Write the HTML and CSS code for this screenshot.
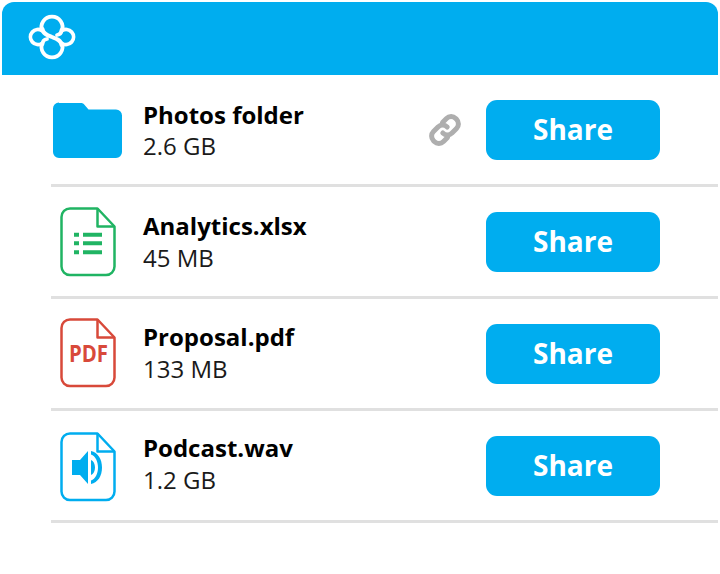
FILE: index.html
```html
<!DOCTYPE html>
<html lang="en">
<head>
  <meta charset="UTF-8">
  <title>Shared files</title>
  <link rel="stylesheet" href="styles.css">
</head>
<body>
  <header class="top-bar">
    <svg class="logo" width="48" height="46" viewBox="0 0 48 46">
      <g fill="none" stroke="#fff" stroke-linecap="round">
        <path stroke-width="3.800" d="M14.200 16.800A10.500 10.500 0 1 1 33.800 16.800A7.500 7.500 0 1 1 33.800 29.200A10.500 10.500 0 1 1 14.200 29.200A7.500 7.500 0 1 1 14.200 16.800z"/>
        <path stroke-width="4" d="M14.500 15C15 20 20 21.500 24 23S33 26 33.500 31"/>
        <path stroke-width="3.800" d="M33.500 16C33.500 18.500 32 20.500 29 21M14.500 30C14.500 27.500 16 25.500 19 25"/>
      </g>
    </svg>
  </header>

  <ul class="file-list">
    <li class="file-row">
      <div class="file-icon">
        <svg width="70" height="56" viewBox="0 0 70 56">
          <path fill="#00adef" d="M6 1h22c1.500 0 2.300.5 3.200 1.500l4.300 5h27.500a6 6 0 0 1 6 6v36.500a6 6 0 0 1-6 6h-57a6 6 0 0 1-6-6v-43.500a6 6 0 0 1 6-6z"/>
        </svg>
      </div>
      <div class="file-info">
        <div class="file-name">Photos folder</div>
        <div class="file-size">2.6 GB</div>
      </div>
      <svg class="link-icon" width="34" height="34" viewBox="0 0 34 34">
        <g fill="none" stroke="#aeaeae" stroke-width="5" stroke-linecap="round">
          <path d="M14.500 9.500l4-4a6.500 6.500 0 0 1 9.200 0l.8.8a6.500 6.500 0 0 1 0 9.200l-4.500 4.500a6.500 6.500 0 0 1-9.200 0"/>
          <path d="M19.500 24.500l-4 4a6.500 6.500 0 0 1-9.200 0l-.8-.8a6.500 6.500 0 0 1 0-9.200l4.500-4.500a6.500 6.500 0 0 1 9.200 0"/>
        </g>
      </svg>
      <button class="share-button">Share</button>
    </li>
    <li class="file-row">
      <div class="file-icon">
        <svg class="doc" width="56" height="70" viewBox="0 0 56 70" stroke="#20b463">
          <path class="doc-line" d="M10 1.500h27.500l17 18v40a8.500 8.500 0 0 1-8.500 8.500h-36a8.500 8.500 0 0 1-8.500-8.500v-49.500a8.500 8.500 0 0 1 8.500-8.500z"/>
          <path class="doc-line" d="M37.500 1.500v18h17"/>
          <path class="list-mark" d="M14 27.700h5M23 27.700h19M14 36.300h5M23 36.300h19M14 45.200h5M23 45.200h19"/>
        </svg>
      </div>
      <div class="file-info">
        <div class="file-name">Analytics.xlsx</div>
        <div class="file-size">45 MB</div>
      </div>
      <button class="share-button">Share</button>
    </li>
    <li class="file-row">
      <div class="file-icon">
        <svg class="doc" width="56" height="70" viewBox="0 0 56 70" stroke="#d8493a">
          <path class="doc-line" d="M10 1.500h27.500l17 18v40a8.500 8.500 0 0 1-8.500 8.500h-36a8.500 8.500 0 0 1-8.500-8.500v-49.500a8.500 8.500 0 0 1 8.500-8.500z"/>
          <path class="doc-line" d="M37.500 1.500v18h17"/>
          <text class="pdf-mark" x="9" y="44" textLength="39" lengthAdjust="spacingAndGlyphs">PDF</text>
        </svg>
      </div>
      <div class="file-info">
        <div class="file-name">Proposal.pdf</div>
        <div class="file-size">133 MB</div>
      </div>
      <button class="share-button">Share</button>
    </li>
    <li class="file-row">
      <div class="file-icon">
        <svg class="doc" width="56" height="70" viewBox="0 0 56 70" stroke="#00adef">
          <path class="doc-line" d="M10 1.500h27.500l17 18v40a8.500 8.500 0 0 1-8.500 8.500h-36a8.500 8.500 0 0 1-8.500-8.500v-49.500a8.500 8.500 0 0 1 8.500-8.500z"/>
          <path class="doc-line" d="M37.500 1.500v18h17"/>
          <path fill="#00adef" stroke="none" d="M12 28h8l8-9v33l-8-9h-8z"/>
          <path fill="#00adef" stroke="none" d="M31 19c7 1.500 11 8 11 16.500s-4 15-11 16.500v-3.500c4.500-1.500 7-7 7-13s-2.500-11.500-7-13zM31 28c2.500 1 4 4 4 7.500s-1.500 6.500-4 7.500z"/>
        </svg>
      </div>
      <div class="file-info">
        <div class="file-name">Podcast.wav</div>
        <div class="file-size">1.2 GB</div>
      </div>
      <button class="share-button">Share</button>
    </li>
  </ul>
</body>
</html>
```

FILE: styles.css
```css
/* page */
body {
  font-family: "Open Sans", sans-serif;
  background-color: #fff;
  color: #000;
  margin: 0;
  padding: 2px 2px 0;
}

.top-bar {
  display: flex;
  align-items: center;
  height: 73px;
  padding: 0 0 3px 26px;
  box-sizing: border-box;
  background-color: #00adef;
  border-radius: 12px 12px 0 0;
}

.file-list {
  list-style: none;
  margin: 0 0 0 49px;
  padding: 0;
}

.file-row {
  display: flex;
  align-items: center;
  height: 112px;
  box-sizing: border-box;
  border-bottom: 3px solid #e0e0e0;
  padding-right: 58px;
}

.file-icon {
  display: flex;
  justify-content: center;
  width: 74px;
  margin-right: 18px;
}

.file-info {
  flex: 1;
}

/* the text blocks sit a little higher on each row down */
.file-row:nth-child(2) .file-info {
  padding-bottom: 1px;
}

.file-row:nth-child(3) .file-info {
  padding-bottom: 3px;
}

.file-row:nth-child(4) .file-info {
  padding-bottom: 5px;
}

.file-row:not(:first-child) .file-size {
  margin-top: 1px;
}

.file-row:nth-child(3) .file-icon {
  padding-bottom: 2px;
}

.file-row:nth-child(4) .file-icon {
  padding-top: 3px;
}

.file-name {
  font-size: 24px;
  font-weight: 700;
  line-height: 32px;
}

.file-size {
  font-size: 24px;
  line-height: 30px;
  color: #1a1a1a;
}

.link-icon {
  margin-right: 24px;
}

.share-button {
  width: 174px;
  height: 60px;
  padding: 0 0 2px;
  border: none;
  border-radius: 11px;
  background-color: #00adef;
  color: #fff;
  font-family: "Open Sans", sans-serif;
  font-size: 28px;
  font-weight: 700;
  cursor: pointer;
}

/* file type icons */
.doc-line {
  fill: none;
  stroke-width: 2.500;
  stroke-linejoin: round;
}

.list-mark {
  fill: none;
  stroke-width: 4;
}

.pdf-mark {
  fill: #d8493a;
  stroke: none;
  font-size: 23px;
  font-weight: 700;
}
```
